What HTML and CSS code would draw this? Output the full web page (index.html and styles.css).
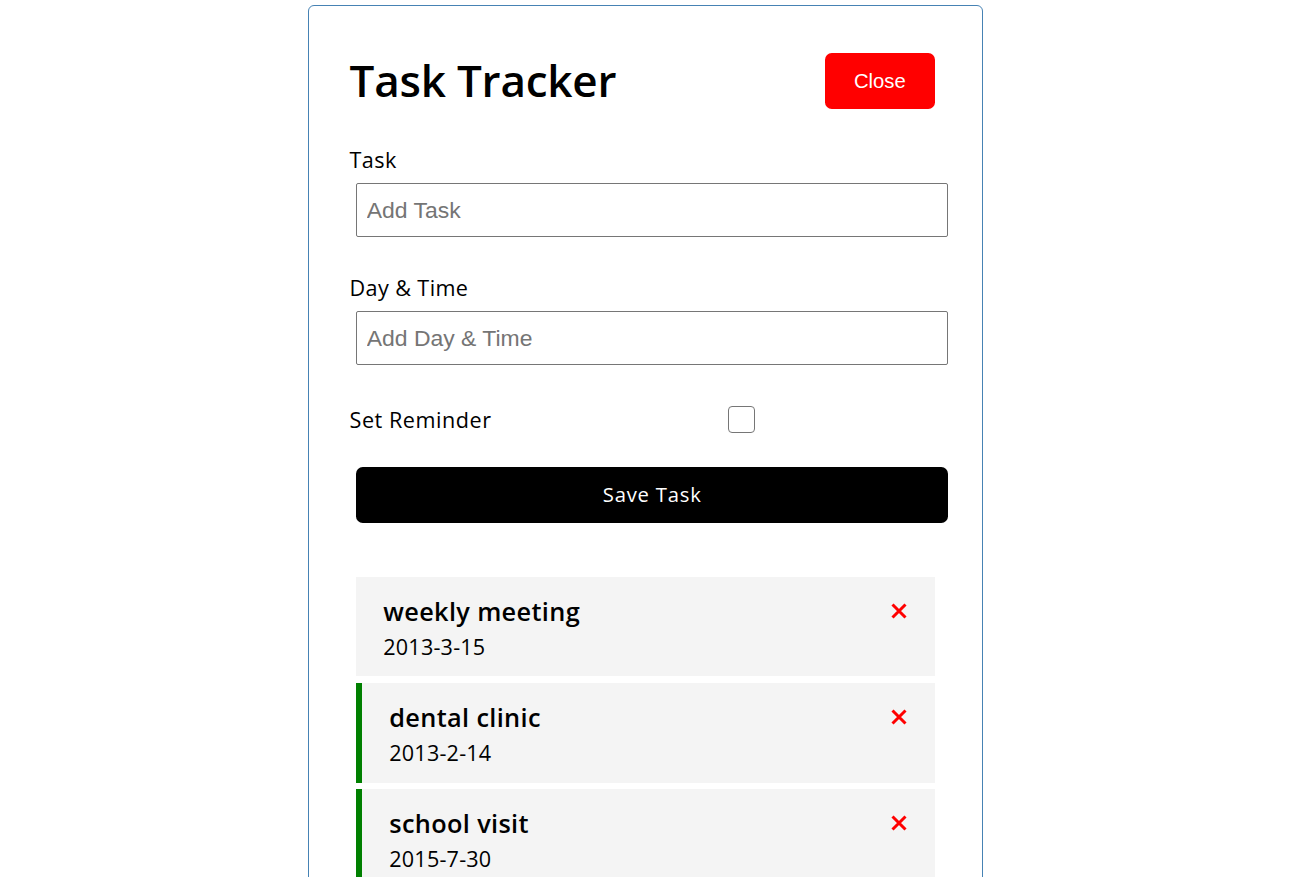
FILE: index.html
```html
<!DOCTYPE html>
<html lang="en">
<head>
<meta charset="utf-8">
<title>Task Tracker</title>
<link rel="stylesheet" href="styles.css">
</head>
<body>
<div class="container">
  <header class="header">
    <h1 class="title">Task Tracker</h1>
    <button class="btn btn-close" type="button">Close</button>
  </header>
  <form class="add-form">
    <div class="form-control">
      <label class="field-label">Task</label>
      <input class="text-input" type="text" placeholder="Add Task">
    </div>
    <div class="form-control">
      <label class="field-label">Day &amp; Time</label>
      <input class="text-input" type="text" placeholder="Add Day &amp; Time">
    </div>
    <div class="form-control form-control-check">
      <label class="check-label">Set Reminder</label>
      <span class="check-wrap"><input class="check-input" type="checkbox"></span>
    </div>
    <input class="btn btn-block" type="submit" value="Save Task">
  </form>
  <div class="tasks">
    <div class="task">
      <h3 class="task-title">weekly meeting
        <svg class="task-del" viewBox="0 0 16 16" aria-hidden="true"><path d="M1.5 1.5 L14.5 14.5 M14.5 1.5 L1.5 14.5"/></svg>
      </h3>
      <p class="task-day">2013-3-15</p>
    </div>
    <div class="task reminder">
      <h3 class="task-title">dental clinic
        <svg class="task-del" viewBox="0 0 16 16" aria-hidden="true"><path d="M1.5 1.5 L14.5 14.5 M14.5 1.5 L1.5 14.5"/></svg>
      </h3>
      <p class="task-day">2013-2-14</p>
    </div>
    <div class="task reminder">
      <h3 class="task-title">school visit
        <svg class="task-del" viewBox="0 0 16 16" aria-hidden="true"><path d="M1.5 1.5 L14.5 14.5 M14.5 1.5 L1.5 14.5"/></svg>
      </h3>
      <p class="task-day">2015-7-30</p>
    </div>
  </div>
</div>
</body>
</html>
```
FILE: styles.css
```css
* {
  box-sizing: border-box;
  margin: 0;
  padding: 0;
}

body {
  font-family: "Open Sans", "Noto Sans", sans-serif;
  color: #000;
  background: #fff;
  padding-right: 12px;
}

.container {
  width: 675px;
  margin: 5px auto 0;
  min-height: 900px;
  border: 1px solid steelblue;
  border-radius: 6px;
  padding: 40.5px;
}

.header {
  display: flex;
  justify-content: space-between;
  align-items: center;
  margin-bottom: 27px;
}

.title {
  font-size: 44px;
  font-weight: 600;
  line-height: 1.4;
  letter-spacing: -0.2px;
}

.btn {
  display: inline-block;
  border: none;
  border-radius: 6.75px;
  margin: 6.75px;
  padding: 13.5px 27px;
  cursor: pointer;
  color: #fff;
}

.btn-close {
  background: #ff0000;
  font-family: "Liberation Sans", Arial, sans-serif;
  font-size: 20.25px;
  line-height: 29px;
  padding: 13.5px 29px;
}

.btn-block {
  display: block;
  width: 100%;
  background: #000;
  font-family: "Open Sans", "Noto Sans", sans-serif;
  font-size: 20.25px;
  font-weight: 500;
  line-height: 29.5px;
  letter-spacing: 0.8px;
}

.add-form {
  margin-bottom: 54px;
}

.form-control {
  margin: 27px 0;
}

.field-label {
  display: block;
  font-size: 21.6px;
  line-height: 33.5px;
  letter-spacing: 0.4px;
}

.text-input {
  display: inline-block;
  vertical-align: top;
  width: 100%;
  height: 54px;
  margin: 6.75px;
  padding: 4px 9.5px;
  border: 1px solid #767676;
  border-radius: 2px;
  font-family: "Liberation Sans", Arial, sans-serif;
  font-size: 22.95px;
  color: #000;
  outline: none;
}

.text-input::placeholder {
  color: #757575;
}

.form-control-check {
  display: flex;
  align-items: center;
  justify-content: space-between;
}

.check-label {
  flex: 1;
  font-size: 21.6px;
  line-height: 33px;
  letter-spacing: 0.55px;
}

.check-wrap {
  flex: 2;
  height: 27px;
  margin: 6.75px;
  display: flex;
  justify-content: center;
}

.check-input {
  appearance: none;
  -webkit-appearance: none;
  width: 27px;
  height: 27px;
  border: 1.5px solid #767676;
  border-radius: 4px;
  background: #fff;
}

.task {
  background: #f4f4f4;
  margin: 6.75px;
  padding: 13.5px 27px;
}

.task.reminder {
  border-left: 6.75px solid green;
}

.task-title {
  display: flex;
  align-items: center;
  justify-content: space-between;
  font-size: 25.3px;
  font-weight: 600;
  line-height: 40px;
  letter-spacing: 0.35px;
}

.task-del {
  width: 16px;
  height: 16px;
  margin-right: 0.5px;
  fill: none;
  stroke: #ff0000;
  stroke-width: 3;
  flex-shrink: 0;
}

.task-day {
  font-size: 21.6px;
  line-height: 32.4px;
  letter-spacing: 0.2px;
}
```
